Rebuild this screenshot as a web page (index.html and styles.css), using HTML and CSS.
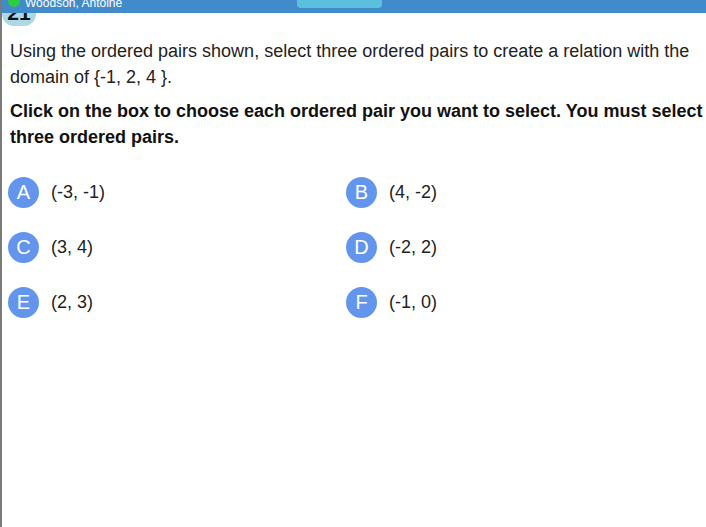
FILE: index.html
```html
<!DOCTYPE html>
<html>
<head>
<meta charset="utf-8">
<link rel="stylesheet" href="styles.css">
</head>
<body>
<div class="page">
  <div class="badge">21</div>
  <div class="topbar">
    <span class="dot"></span>
    <span class="name">Woodson, Antoine</span>
    <span class="tab"></span>
  </div>
  <div class="content">
    <p class="q">Using the ordered pairs shown, select three ordered pairs to create a relation with the domain of {-1, 2, 4 }.</p>
    <p class="q bold">Click on the box to choose each ordered pair you want to select. You must select three ordered pairs.</p>
    <div class="options">
      <div class="opt"><span class="letter">A</span><span class="val">(-3, -1)</span></div>
      <div class="opt"><span class="letter">B</span><span class="val">(4, -2)</span></div>
      <div class="opt"><span class="letter">C</span><span class="val">(3, 4)</span></div>
      <div class="opt"><span class="letter">D</span><span class="val">(-2, 2)</span></div>
      <div class="opt"><span class="letter">E</span><span class="val">(2, 3)</span></div>
      <div class="opt"><span class="letter">F</span><span class="val">(-1, 0)</span></div>
    </div>
  </div>
</div>
</body>
</html>
```
FILE: styles.css
```css
html, body {
  margin: 0;
  padding: 0;
  background: #fff;
  font-family: "Liberation Sans", Arial, sans-serif;
  color: #222;
}
.page {
  position: relative;
  width: 706px;
  height: 527px;
  box-sizing: border-box;
  border-left: 2px solid #7a7a7a;
  overflow: hidden;
}
.topbar {
  position: absolute;
  left: -2px;
  top: 0;
  width: 708px;
  height: 13px;
  background: #428bca;
  z-index: 2;
  overflow: hidden;
}
.dot {
  position: absolute;
  left: 8px;
  top: -5px;
  width: 12px;
  height: 12px;
  border-radius: 50%;
  background: #2ecc40;
}
.name {
  position: absolute;
  left: 25px;
  top: -5px;
  font-size: 12px;
  line-height: 16px;
  color: #fff;
}
.tab {
  position: absolute;
  left: 297px;
  top: -4px;
  width: 85px;
  height: 12px;
  background: #5bc0de;
  border-radius: 4px;
}
.badge {
  position: absolute;
  left: 0;
  top: -6px;
  width: 34px;
  height: 32px;
  background: #add8e6;
  border-radius: 0 0 12px 12px;
  font-size: 21px;
  font-weight: bold;
  line-height: 26px;
  padding-top: 6px;
  box-sizing: border-box;
  color: #111;
  text-align: center;
  z-index: 1;
}
.content {
  padding: 38px 0 0 8px;
}
.q {
  margin: 0 0 8px 0;
  font-size: 18px;
  line-height: 26px;
  color: #222;
}
.bold {
  font-weight: bold;
  color: #111;
}
.options {
  display: grid;
  grid-template-columns: 338px 338px;
  padding-top: 7px;
  margin-left: -2px;
}
.opt {
  display: flex;
  align-items: center;
  height: 55px;
}
.letter {
  width: 31px;
  height: 31px;
  border-radius: 50%;
  background: #6495ed;
  color: #fff;
  font-size: 20px;
  line-height: 31px;
  text-align: center;
}
.val {
  margin-left: 12px;
  font-size: 18px;
  color: #222;
}
```
